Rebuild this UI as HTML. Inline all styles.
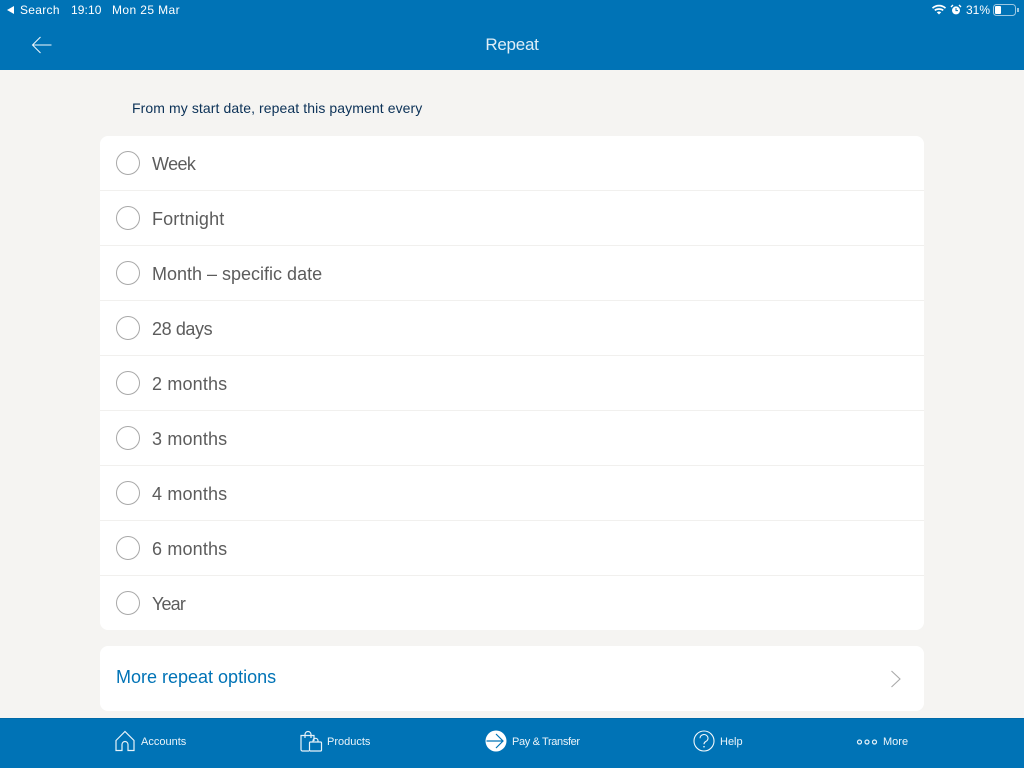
<!DOCTYPE html>
<html lang="en"><head><meta charset="utf-8"><title>Repeat</title>
<style>
*{box-sizing:border-box}
html,body{margin:0;padding:0}
body{width:1024px;height:768px;overflow:hidden;position:relative;background:#f5f4f2;font-family:"Liberation Sans",sans-serif}
.a{position:absolute;white-space:nowrap}
.header{left:0;top:0;width:1024px;height:70px;background:#0073b6}
.st{color:#fff;font-size:12px;line-height:14px;top:3px}
.card{background:#fff;border-radius:8px;left:100px;width:824px}
.row{left:0;width:824px;height:55px;border-bottom:1px solid #f1f0ee}
.radio{left:16px;top:15px;width:24px;height:24px;border:1px solid #a8a8a8;border-radius:50%}
.lab{left:52px;top:17px;font-size:18px;line-height:22px;color:#5c5c5c}
.m{letter-spacing:.16px}
.nav{left:0;top:718px;width:1024px;height:50px;background:#0073b6;border-top:1px solid #0069a8}
.nl{color:#eaf4fa;font-size:11px;line-height:14px;top:16px}
</style></head><body>
<div class="a header"></div>
<svg class="a" style="left:5px;top:4px" width="12" height="12"><path d="M2 6 9 2V10Z" fill="#fff"/></svg>
<div class="a st" style="left:20px;letter-spacing:.3px">Search</div>
<div class="a st" style="left:71px;letter-spacing:.1px">19:10</div>
<div class="a st" style="left:112px;letter-spacing:.4px">Mon 25 Mar</div>
<svg class="a" style="left:931px;top:3px" width="16" height="13" viewBox="0 0 16 13" fill="none" stroke="#fff" stroke-width="1.7"><path d="M1.500 5.200C5 1.800 11 1.800 14.500 5.200M3.800 7.400C6 5.500 10 5.500 12.200 7.400"/><path d="M8 11.500 5.800 9.300C7 8.300 9 8.300 10.200 9.300Z" fill="#fff" stroke="none"/></svg>
<svg class="a" style="left:950px;top:4px" width="12" height="12" viewBox="0 0 12 12"><circle cx="6" cy="6.400" r="4" fill="#fff"/><path d="M6 4V6.600H8" stroke="#0073b6" fill="none"/><path d="M1 3 3 1M11 3 9 1" stroke="#fff" stroke-width="1.400"/></svg>
<div class="a st" style="left:966px">31%</div>
<div class="a" style="left:993px;top:4px;width:23px;height:12px;border:1px solid #9cc8e2;border-radius:3.500px"></div>
<div class="a" style="left:995px;top:6px;width:6px;height:8px;background:#fff;border-radius:1px"></div>
<div class="a" style="left:1017px;top:8px;width:1.500px;height:4px;background:#9cc8e2"></div>
<svg class="a" style="left:30px;top:35px" width="24" height="20" viewBox="0 0 24 20" fill="none" stroke="#f2f8fc" stroke-width="1"><path d="M21.500 10H2.500M10.500 2 2.500 10 10.500 18"/></svg>
<div class="a" style="left:0;width:1024px;top:35px;text-align:center;color:#dfeef7;font-size:17px;line-height:20px;letter-spacing:-.25px">Repeat</div>

<div class="a" style="left:132px;top:100px;color:#0b3157;font-size:14px;line-height:17px;letter-spacing:.09px">From my start date, repeat this payment every</div>

<div class="a card" style="top:136px;height:494px">
<div class="a row" style="top:0"><div class="a radio"></div><div class="a lab" style="letter-spacing:-.6px">Week</div></div>
<div class="a row" style="top:55px"><div class="a radio"></div><div class="a lab" style="letter-spacing:.15px">Fortnight</div></div>
<div class="a row" style="top:110px"><div class="a radio"></div><div class="a lab">Month – specific date</div></div>
<div class="a row" style="top:165px"><div class="a radio"></div><div class="a lab" style="letter-spacing:-.4px">28 days</div></div>
<div class="a row" style="top:220px"><div class="a radio"></div><div class="a lab m">2 months</div></div>
<div class="a row" style="top:275px"><div class="a radio"></div><div class="a lab m">3 months</div></div>
<div class="a row" style="top:330px"><div class="a radio"></div><div class="a lab m">4 months</div></div>
<div class="a row" style="top:385px"><div class="a radio"></div><div class="a lab m">6 months</div></div>
<div class="a row" style="top:440px;border-bottom:0"><div class="a radio"></div><div class="a lab" style="letter-spacing:-.85px">Year</div></div>
</div>

<div class="a card" style="top:646px;height:65px">
<div class="a" style="left:16px;top:20px;font-size:18px;line-height:22px;color:#0073b6">More repeat options</div>
<svg class="a" style="left:788px;top:23px" width="16" height="20" viewBox="0 0 16 20" fill="none" stroke="#a9a9a9" stroke-width="1.100"><path d="M3.500 2 12 10 3.500 18"/></svg>
</div>

<div class="a nav"></div>
<svg class="a" style="left:114px;top:729px" width="22" height="24" viewBox="0 0 22 24" fill="none" stroke="#e6f2f9" stroke-width="1.200"><path d="M2 11.500 11 2.500 20 11.500V21.500H14V15.500A3 3 0 0 0 8 15.500V21.500H2Z"/></svg>
<div class="a nl" style="left:141px;top:735px">Accounts</div>
<svg class="a" style="left:300px;top:730px" width="24" height="24" viewBox="0 0 24 24" fill="none" stroke="#e6f2f9" stroke-width="1.200"><path d="M9 21H2.500A1.500 1.500 0 0 1 1 19.500V5.500H14V11"/><path d="M5 8V4.500A3 3 0 0 1 11 4.500V8"/><rect x="9.500" y="12" width="12" height="9" rx="1"/><path d="M13 12V10.800A2.500 2.500 0 0 1 18 10.800V12"/></svg>
<div class="a nl" style="left:327px;top:735px">Products</div>
<svg class="a" style="left:485px;top:730px" width="22" height="22" viewBox="0 0 22 22"><circle cx="11" cy="11" r="10.500" fill="#fff"/><path d="M1.500 11H18M11 4 18 11 11 18" fill="none" stroke="#0073b6" stroke-width="1.200"/></svg>
<div class="a nl" style="left:512px;top:735px;letter-spacing:-.36px">Pay &amp; Transfer</div>
<svg class="a" style="left:693px;top:730px" width="22" height="22" viewBox="0 0 22 22" fill="none" stroke="#f0f7fb" stroke-width="1.100"><circle cx="11" cy="11" r="10"/><path d="M7 8.200A4 3.700 0 1 1 12.800 11.500C11.500 12.200 11 12.800 11 14.300"/><path d="M11 16V17.400" stroke-width="1.400"/></svg>
<div class="a nl" style="left:720px;top:735px">Help</div>
<svg class="a" style="left:856px;top:737px" width="22" height="10" viewBox="0 0 22 10" fill="none" stroke="#e6f2f9" stroke-width="1.200"><circle cx="3.500" cy="5" r="2"/><circle cx="11" cy="5" r="2"/><circle cx="18.500" cy="5" r="2"/></svg>
<div class="a nl" style="left:883px;top:735px">More</div>
</body></html>
